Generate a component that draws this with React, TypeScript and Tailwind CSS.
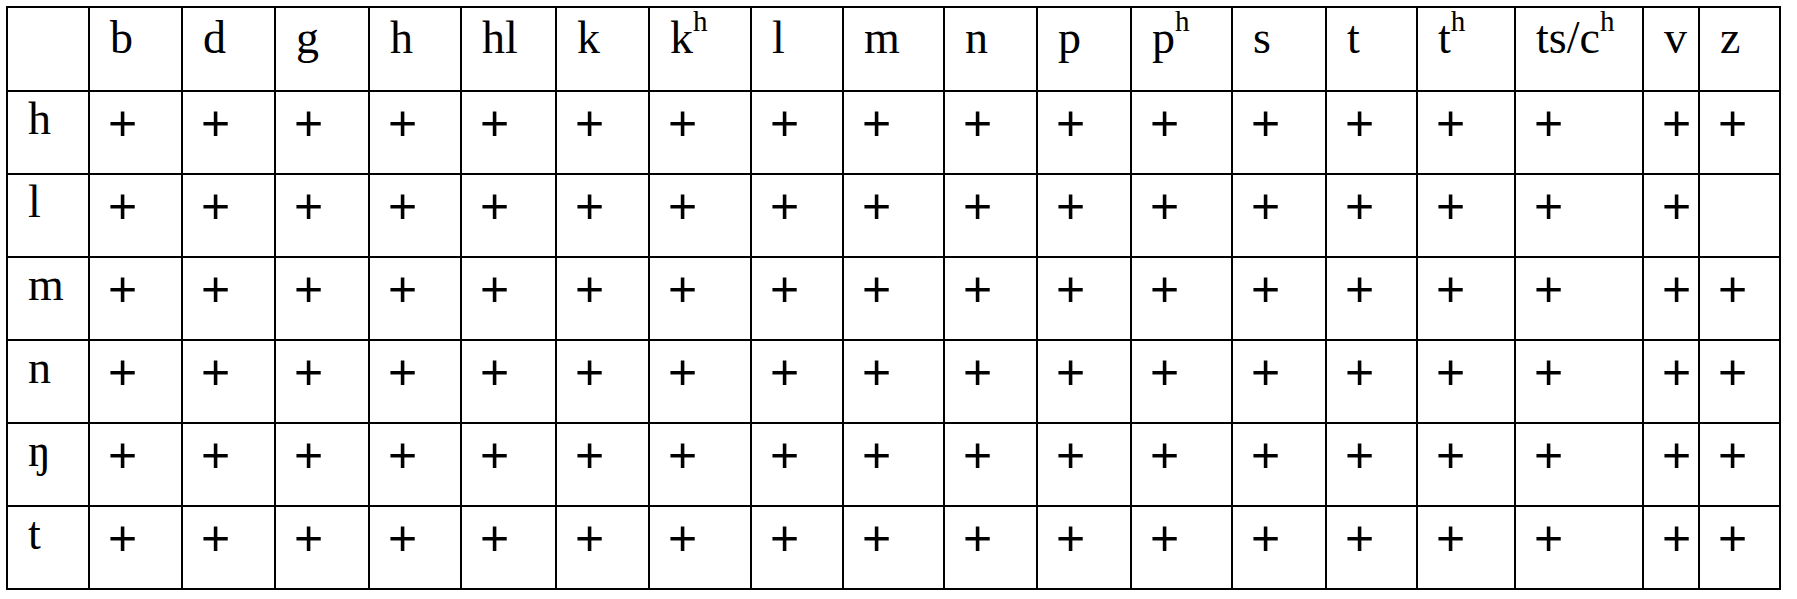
const widths = [
  "w-[82px]", "w-[93px]", "w-[93px]", "w-[94px]", "w-[92px]", "w-[95px]", "w-[93px]",
  "w-[102px]", "w-[92px]", "w-[101px]", "w-[93px]", "w-[94px]", "w-[101px]", "w-[94px]",
  "w-[91px]", "w-[98px]", "w-[128px]", "w-[56px]", "w-[81px]",
]

type Head = { base: string; sup?: string }

const heads: Head[] = [
  { base: "" },
  { base: "b" },
  { base: "d" },
  { base: "g" },
  { base: "h" },
  { base: "hl" },
  { base: "k" },
  { base: "k", sup: "h" },
  { base: "l" },
  { base: "m" },
  { base: "n" },
  { base: "p" },
  { base: "p", sup: "h" },
  { base: "s" },
  { base: "t" },
  { base: "t", sup: "h" },
  { base: "ts/c", sup: "h" },
  { base: "v" },
  { base: "z" },
]

const rows = [
  { label: "h", missing: [] as number[] },
  { label: "l", missing: [17] },
  { label: "m", missing: [] },
  { label: "n", missing: [] },
  { label: "ŋ", missing: [] },
  { label: "t", missing: [] },
]

const cell = "border-2 border-black align-top pl-[20px] text-[46px] leading-[51px] whitespace-nowrap"

function Plus() {
  return (
    <span className="-ml-[2px] font-['Liberation_Sans',Arial,sans-serif] text-[50px] leading-[0] align-[-6px]">
      +
    </span>
  )
}

export default function App() {
  return (
    <div className="min-h-screen bg-white text-black font-['Liberation_Serif','Times_New_Roman',serif]">
      <table className="ml-[6px] mt-[6px] w-[1775px] table-fixed border-collapse">
        <colgroup>
          {widths.map((w, i) => (
            <col key={i} className={w} />
          ))}
        </colgroup>
        <thead>
          <tr className="h-[84px]">
            {heads.map((h, i) => (
              <th key={i} className={`${cell} pt-[4px] text-left font-normal`}>
                {h.base}
                {h.sup && <sup className="relative -top-[22px] text-[29px] leading-[0]">{h.sup}</sup>}
              </th>
            ))}
          </tr>
        </thead>
        <tbody>
          {rows.map((r) => (
            <tr key={r.label} className="h-[83px]">
              <td className={`${cell} pt-[1px]`}>{r.label}</td>
              {heads.slice(1).map((_, i) => (
                <td key={i} className={`${cell} pt-[1px]`}>
                  {r.missing.includes(i) ? null : <Plus />}
                </td>
              ))}
            </tr>
          ))}
        </tbody>
      </table>
    </div>
  )
}
